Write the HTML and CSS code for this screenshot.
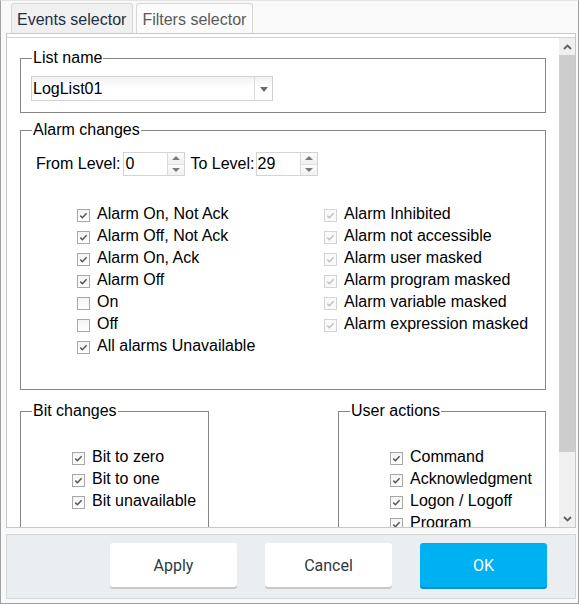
FILE: index.html
```html
<!DOCTYPE html>
<html lang="en">
<head>
<meta charset="utf-8">
<title>Events selector</title>
<link rel="stylesheet" href="styles.css">
</head>
<body>
<div class="window">
  <div class="tabs">
    <div class="tab active">Events selector</div>
    <div class="tab">Filters selector</div>
  </div>
  <div class="panel">
    <div class="scroller">
      <div class="content">
        <fieldset class="group group-list">
          <legend>List name</legend>
          <div class="group-body list-body">
            <div class="combo">
              <span class="combo-text">LogList01</span>
              <span class="combo-btn"><span class="tri-down"></span></span>
            </div>
          </div>
        </fieldset>

        <fieldset class="group group-alarm">
          <legend>Alarm changes</legend>
          <div class="group-body alarm-body">
            <div class="level-row">
              <span class="lbl">From Level:</span>
              <div class="spin">
                <span class="spin-val">0</span>
                <span class="spin-btns"><span class="sp"><span class="tri-up"></span></span><span class="sp"><span class="tri-down sm"></span></span></span>
              </div>
              <span class="lbl lbl-to">To Level:</span>
              <div class="spin">
                <span class="spin-val">29</span>
                <span class="spin-btns"><span class="sp"><span class="tri-up"></span></span><span class="sp"><span class="tri-down sm"></span></span></span>
              </div>
            </div>
            <div class="check-cols">
              <div class="col col-left">
                <div class="chk"><span class="box"><svg viewBox="0 0 11 11"><path d="M2.3 5.6 L4.4 7.7 L8.6 3.2"/></svg></span>Alarm On, Not Ack</div>
                <div class="chk"><span class="box"><svg viewBox="0 0 11 11"><path d="M2.3 5.6 L4.4 7.7 L8.6 3.2"/></svg></span>Alarm Off, Not Ack</div>
                <div class="chk"><span class="box"><svg viewBox="0 0 11 11"><path d="M2.3 5.6 L4.4 7.7 L8.6 3.2"/></svg></span>Alarm On, Ack</div>
                <div class="chk"><span class="box"><svg viewBox="0 0 11 11"><path d="M2.3 5.6 L4.4 7.7 L8.6 3.2"/></svg></span>Alarm Off</div>
                <div class="chk"><span class="box"></span>On</div>
                <div class="chk"><span class="box"></span>Off</div>
                <div class="chk"><span class="box"><svg viewBox="0 0 11 11"><path d="M2.3 5.6 L4.4 7.7 L8.6 3.2"/></svg></span>All alarms Unavailable</div>
              </div>
              <div class="col">
                <div class="chk dis"><span class="box"><svg viewBox="0 0 11 11"><path d="M2.3 5.6 L4.4 7.7 L8.6 3.2"/></svg></span>Alarm Inhibited</div>
                <div class="chk dis"><span class="box"><svg viewBox="0 0 11 11"><path d="M2.3 5.6 L4.4 7.7 L8.6 3.2"/></svg></span>Alarm not accessible</div>
                <div class="chk dis"><span class="box"><svg viewBox="0 0 11 11"><path d="M2.3 5.6 L4.4 7.7 L8.6 3.2"/></svg></span>Alarm user masked</div>
                <div class="chk dis"><span class="box"><svg viewBox="0 0 11 11"><path d="M2.3 5.6 L4.4 7.7 L8.6 3.2"/></svg></span>Alarm program masked</div>
                <div class="chk dis"><span class="box"><svg viewBox="0 0 11 11"><path d="M2.3 5.6 L4.4 7.7 L8.6 3.2"/></svg></span>Alarm variable masked</div>
                <div class="chk dis"><span class="box"><svg viewBox="0 0 11 11"><path d="M2.3 5.6 L4.4 7.7 L8.6 3.2"/></svg></span>Alarm expression masked</div>
              </div>
            </div>
          </div>
        </fieldset>

        <div class="bottom-groups">
          <fieldset class="group group-bit">
            <legend>Bit changes</legend>
            <div class="group-body small-body">
              <div class="chk"><span class="box"><svg viewBox="0 0 11 11"><path d="M2.3 5.6 L4.4 7.7 L8.6 3.2"/></svg></span>Bit to zero</div>
              <div class="chk"><span class="box"><svg viewBox="0 0 11 11"><path d="M2.3 5.6 L4.4 7.7 L8.6 3.2"/></svg></span>Bit to one</div>
              <div class="chk"><span class="box"><svg viewBox="0 0 11 11"><path d="M2.3 5.6 L4.4 7.7 L8.6 3.2"/></svg></span>Bit unavailable</div>
            </div>
          </fieldset>
          <fieldset class="group group-user">
            <legend>User actions</legend>
            <div class="group-body small-body">
              <div class="chk"><span class="box"><svg viewBox="0 0 11 11"><path d="M2.3 5.6 L4.4 7.7 L8.6 3.2"/></svg></span>Command</div>
              <div class="chk"><span class="box"><svg viewBox="0 0 11 11"><path d="M2.3 5.6 L4.4 7.7 L8.6 3.2"/></svg></span>Acknowledgment</div>
              <div class="chk"><span class="box"><svg viewBox="0 0 11 11"><path d="M2.3 5.6 L4.4 7.7 L8.6 3.2"/></svg></span>Logon / Logoff</div>
              <div class="chk"><span class="box"><svg viewBox="0 0 11 11"><path d="M2.3 5.6 L4.4 7.7 L8.6 3.2"/></svg></span>Program</div>
            </div>
          </fieldset>
        </div>
      </div>
      <div class="vscroll">
        <span class="sb-btn"><svg width="9" height="6" viewBox="0 0 9 6"><polyline points="1,5 4.5,1.5 8,5"/></svg></span>
        <span class="thumb"></span>
        <span class="sb-track"></span>
        <span class="sb-btn"><svg width="9" height="6" viewBox="0 0 9 6"><polyline points="1,1 4.5,4.5 8,1"/></svg></span>
      </div>
    </div>
  </div>
  <div class="buttonbar">
    <button class="btn">Apply</button>
    <button class="btn">Cancel</button>
    <button class="btn btn-ok">OK</button>
  </div>
</div>
</body>
</html>
```

FILE: styles.css
```css
* { box-sizing: border-box; }
html, body { margin: 0; padding: 0; }
body {
  background: #ffffff;
  font-family: "Liberation Sans", Arial, sans-serif;
  font-size: 16px;
  color: #000;
}

.window {
  width: 579px;
  height: 604px;
  border: 1px solid #a0a0a0;
  border-top-color: #e4e4e4;
  background: #f9f9f9;
  display: flex;
  flex-direction: column;
}

/* tabs */
.tabs {
  display: flex;
  gap: 3px;
  height: 32px;
  padding: 2px 0 0 10px;
}
.tab {
  height: 30px;
  padding: 2px 6px 0 5px;
  border: 1px solid #d8d8d8;
  border-bottom: none;
  border-radius: 3px 3px 0 0;
  line-height: 28px;
  background: #fbfbfb;
  color: #5a5a5a;
  white-space: nowrap;
}
.tab.active {
  background: #f0f0f0;
  color: #1d2f42;
}

/* panel */
.panel {
  margin: 0 2px 0 5px;
  height: 495px;
  border: 1px solid #c8c8c8;
  background: #fff;
  padding-top: 3px;
  display: flex;
  flex-direction: column;
}
.scroller {
  flex: 1;
  border-top: 1px solid #d2d2d2;
  display: flex;
  min-height: 0;
}
.content {
  flex: 1;
  overflow: hidden;
  padding-top: 11px;
}

/* group boxes */
.group {
  margin: 0 13px;
  padding: 0;
  border: 1px solid #868686;
  min-width: 0;
}
.group legend {
  margin-left: 11px;
  padding: 0 1px;
  line-height: 18px;
  font-size: 16px;
}
.list-body { padding: 9px 0 11px 10px; }

.combo {
  width: 242px;
  height: 25px;
  border: 1px solid #d2d2d2;
  display: flex;
  background: linear-gradient(#f1f1f1, #ffffff 45%);
}
.combo-text {
  flex: 1;
  padding-left: 1px;
  line-height: 23px;
}
.combo-btn {
  width: 18px;
  border-left: 1px solid #dcdcdc;
  display: flex;
  align-items: center;
  justify-content: center;
}
.tri-down {
  width: 0; height: 0;
  border-left: 4px solid transparent;
  border-right: 4px solid transparent;
  border-top: 5px solid #6a6a6a;
  margin-top: 1px;
}
.tri-up {
  width: 0; height: 0;
  border-left: 4px solid transparent;
  border-right: 4px solid transparent;
  border-bottom: 4px solid #7a7a7a;
}
.tri-down.sm {
  border-top: 4px solid #7a7a7a;
  margin-top: 0;
}

.group-alarm { margin-top: 8px; }
.alarm-body { padding: 13px 0 32px 15px; }

.level-row {
  display: flex;
  align-items: center;
  height: 24px;
}
.lbl { margin-right: 3px; white-space: nowrap; }
.lbl-to { margin-left: 5px; margin-right: 1px; }
.spin {
  width: 62px;
  height: 24px;
  border: 1px solid #d4d4d4;
  display: flex;
  background: #fff;
}
.spin-val {
  flex: 1;
  padding-left: 1px;
  line-height: 22px;
}
.spin-btns {
  width: 17px;
  border-left: 1px solid #dadada;
  display: flex;
  flex-direction: column;
}
.sp {
  flex: 1;
  display: flex;
  align-items: center;
  justify-content: center;
  background: linear-gradient(#fbfbfb, #f1f1f1);
}
.sp + .sp { border-top: 1px solid #e2e2e2; }

.check-cols {
  display: flex;
  margin-top: 27px;
  padding-left: 41px;
}
.col-left { width: 247px; }

.chk {
  display: flex;
  height: 22px;
  line-height: 22px;
  white-space: nowrap;
}
.box {
  flex: none;
  width: 13px;
  height: 13px;
  margin: 6px 7px 0 0;
  border: 1px solid #a8a8a8;
  background: linear-gradient(#f4f4f4, #ffffff);
  display: flex;
}
.box svg {
  width: 11px;
  height: 11px;
  fill: none;
  stroke: #555;
  stroke-width: 1.5;
}
.chk.dis .box { border-color: #d4d4d4; background: #fafafa; }
.chk.dis .box svg { stroke: #c2c2c2; }

.bottom-groups {
  display: flex;
  justify-content: space-between;
  margin: 12px 13px 0;
}
.bottom-groups .group { margin: 0; }
.group-bit { width: 189px; }
.group-user { width: 208px; }
.small-body { padding: 26px 0 30px 51px; }

/* scrollbar */
.vscroll {
  width: 16px;
  flex: none;
  background: #f0f0f0;
  display: flex;
  flex-direction: column;
}
.sb-btn {
  height: 17px;
  flex: none;
  display: flex;
  align-items: center;
  justify-content: center;
}
.sb-btn svg {
  fill: none;
  stroke: #606060;
  stroke-width: 1.8;
}
.thumb {
  height: 397px;
  flex: none;
  background: #cdcdcd;
}
.sb-track { flex: 1; }

/* button bar */
.buttonbar {
  margin: 6px 2px 0 5px;
  height: 65px;
  border: 1px solid #d5d8d9;
  background: #ebeef0;
  display: flex;
  justify-content: flex-end;
  align-items: flex-start;
  gap: 28px;
  padding: 8px 28px 0 0;
}
.btn {
  width: 127px;
  height: 44px;
  border: none;
  border-radius: 3px;
  background: #ffffff;
  box-shadow: 0 2px 0 #c9c9c9;
  font-family: Roboto, "Liberation Sans", sans-serif;
  font-size: 16px;
  color: #2e3a44;
  padding: 0;
}
.btn-ok {
  background: #00b1f2;
  box-shadow: 0 2px 0 #0090cc;
  color: #ffffff;
}
```
